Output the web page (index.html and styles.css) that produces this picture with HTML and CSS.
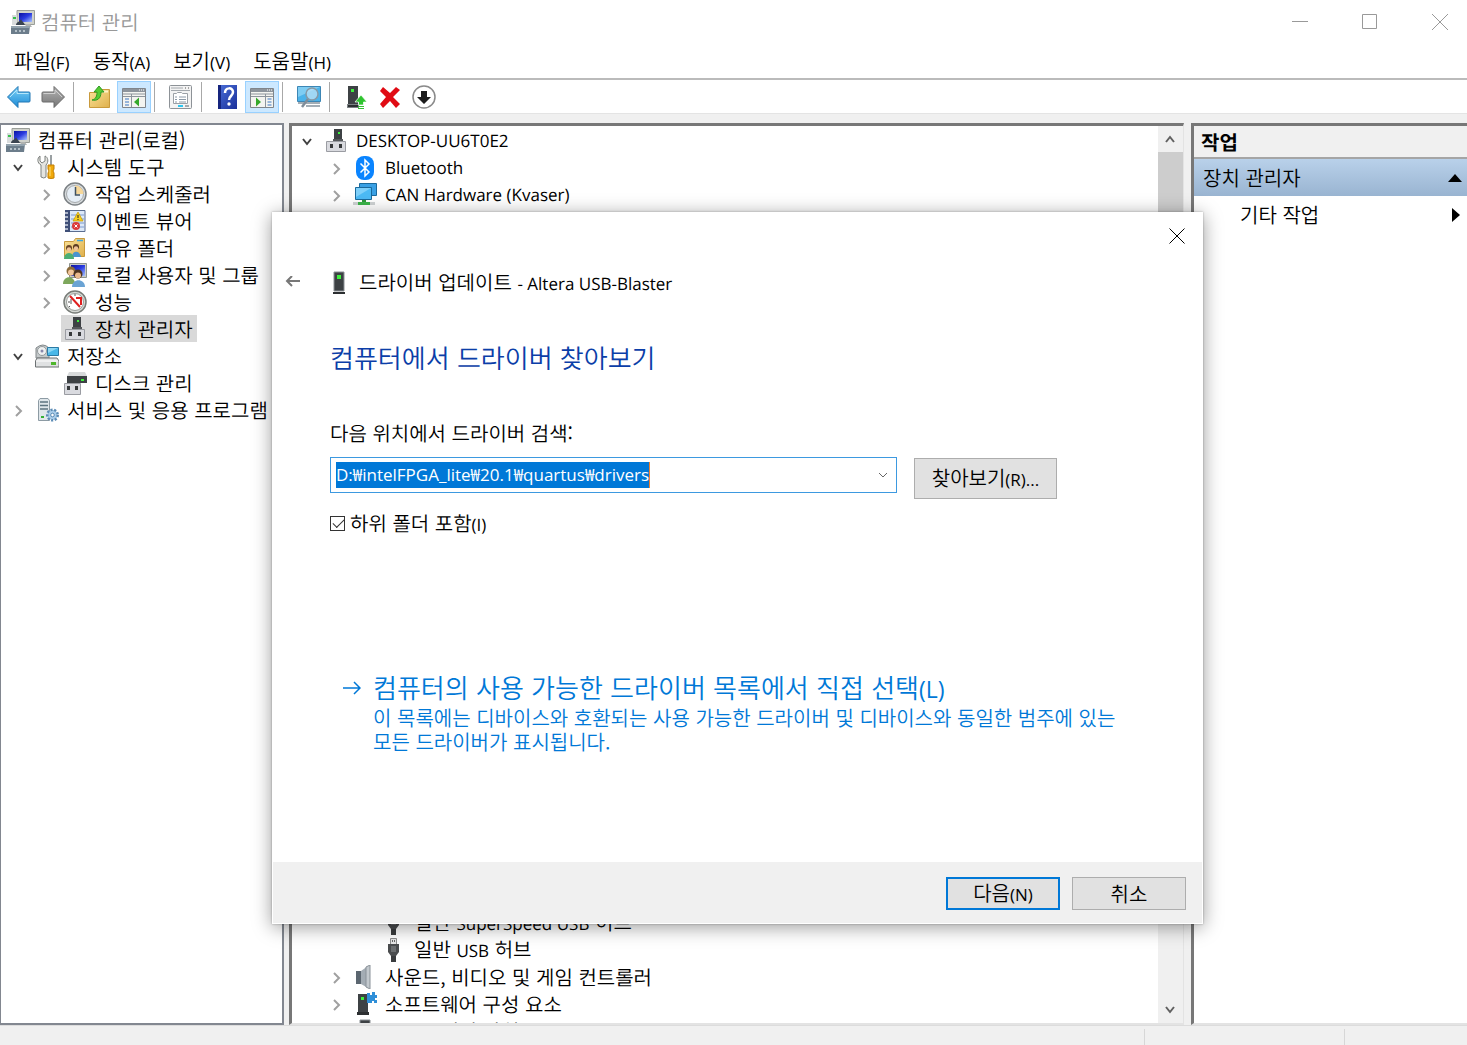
FILE: index.html
```
<!DOCTYPE html>
<html lang="ko">
<head>
    <meta charset="UTF-8">
    <meta name="viewport" content="width=device-width, initial-scale=1.0">
    <title>컴퓨터 관리</title>
    <link rel="stylesheet" href="styles.css">
</head>
<body>
    <!-- icon set -->
    <svg class="sprite" aria-hidden="true">
        <defs>
            <linearGradient id="g-screen" x1="0" y1="0" x2="1" y2="1">
                <stop offset="0" stop-color="#0a10a0"/><stop offset=".5" stop-color="#2a3be0"/><stop offset="1" stop-color="#a9c4ff"/>
            </linearGradient>
            <linearGradient id="g-blue" x1="0" y1="0" x2="0" y2="1">
                <stop offset="0" stop-color="#7fd3f7"/><stop offset="1" stop-color="#1c8ad6"/>
            </linearGradient>
            <linearGradient id="g-gray" x1="0" y1="0" x2="0" y2="1">
                <stop offset="0" stop-color="#b5b5b5"/><stop offset="1" stop-color="#747474"/>
            </linearGradient>
            <linearGradient id="g-folder" x1="0" y1="0" x2="1" y2="1">
                <stop offset="0" stop-color="#fbe39a"/><stop offset="1" stop-color="#dfb04c"/>
            </linearGradient>
            <linearGradient id="g-help" x1="0" y1="0" x2="1" y2="1">
                <stop offset="0" stop-color="#4a6fd8"/><stop offset="1" stop-color="#1a2f9a"/>
            </linearGradient>
        </defs>
        <symbol id="i-computer" viewBox="0 0 24 24">
            <path d="M6 .500h17.500v14H6z" fill="#d0d2cb" stroke="#9a9e99"/>
            <path d="M8 3h13v9H8z" fill="url(#g-screen)"/>
            <path d="M15 14h4l2 3h-7z" fill="#b0b3b1"/>
            <path d="M1 5h5v10H1z" fill="#d8dbdc"/>
            <path d="M2 7h3v2H2z" fill="#35c04a"/>
            <path d="M5 15c0-3 4-3 5-6 1 3 3 3 4 6" fill="#3a4450"/>
            <path d="M0 16h19l-1 8H0z" fill="#6c7d8b"/>
            <path d="M0 16h19v2H0z" fill="#93a3ae"/>
            <path d="M4 20h2v2H4zM8 20h2v2H8zM12 20h2v2h-2z" fill="#b4c0c8"/>
        </symbol>
        <symbol id="i-back" viewBox="0 0 24 24">
            <path d="M.500 12 11 1.500V7h11q1 0 1 1v8q0 1-1 1H11v5.500z" fill="url(#g-blue)" stroke="#2176b4"/>
            <path d="M3 12l7-7v3.500h11.500" fill="none" stroke="#b4e6fb"/>
        </symbol>
        <symbol id="i-forward" viewBox="0 0 24 24">
            <path d="M23.500 12 13 1.500V7H2q-1 0-1 1v8q0 1 1 1h11v5.500z" fill="url(#g-gray)" stroke="#6b6b6b"/>
            <path d="M2.500 8.500H14V5l7 7" fill="none" stroke="#cfcfcf"/>
        </symbol>
        <symbol id="i-upfolder" viewBox="0 0 24 24">
            <path d="M1.500 7.500h9l2-3h9v18h-20z" fill="url(#g-folder)" stroke="#c99a3c"/>
            <path d="M14 6.500h6" stroke="#fff3c8" stroke-width="2"/>
            <path d="M4 15c4-1 5-4 5-8H6l5-6 5 6h-3c0 7-4 9-9 8z" fill="#55cc34" stroke="#2f9a22"/>
        </symbol>
        <symbol id="i-treepane" viewBox="0 0 24 24">
            <path d="M.500 3.500h23v19H.500z" fill="#f4f4f0" stroke="#80858b"/>
            <path d="M1 4h22v3H1z" fill="#8d949c"/>
            <path d="M17 5h1M19 5h1M21 5h1" stroke="#fff"/>
            <path d="M1 9h22M9.500 9v13M1 11.500h22" stroke="#8d949c"/>
            <path d="M3 14h4M3 17h4M3 20h4" stroke="#3b76c4"/>
            <path d="M17 12.500v9L12 17z" fill="#35a829"/>
        </symbol>
        <symbol id="i-actionpane" viewBox="0 0 24 24">
            <path d="M.500 3.500h23v19H.500z" fill="#f4f4f0" stroke="#80858b"/>
            <path d="M1 4h22v3H1z" fill="#8d949c"/>
            <path d="M17 5h1M19 5h1M21 5h1" stroke="#fff"/>
            <path d="M1 9h22M15.500 9v13M1 11.500h22" stroke="#8d949c"/>
            <path d="M17.500 14h4M17.500 17h4M17.500 20h4" stroke="#3b76c4"/>
            <path d="M6 12.500v9l5-4.500z" fill="#35a829"/>
        </symbol>
        <symbol id="i-props" viewBox="0 0 24 24">
            <rect x=".500" y=".500" width="22" height="23" rx="1" fill="#f3f3f3" stroke="#8d9297"/>
            <path d="M2 3h12M2 5.500h19" stroke="#a4a9ae"/>
            <path d="M16 3h1M19 3h1" stroke="#555"/>
            <path d="M4.500 8.500h3l1-1h4l1 1h5v10h-14z" fill="#fff" stroke="#9ba0a6"/>
            <path d="M6 12h2M10 12h7M6 14.500h2M10 14.500h7M6 17h2M10 17h7" stroke="#8b98a6"/>
            <path d="M9 21h5" stroke="#2bc6f0" stroke-width="2"/>
            <path d="M16 21h4" stroke="#a4a9ae" stroke-width="2"/>
        </symbol>
        <symbol id="i-help" viewBox="0 0 24 24">
            <path d="M2 0h19v24H2z" fill="url(#g-help)"/>
            <path d="M2 0h3v24H2z" fill="#16257e"/>
            <path d="M9 8c0-6 8-6 8-1 0 4-4 4-4 8" fill="none" stroke="#fff" stroke-width="2.500"/>
            <circle cx="13" cy="19" r="1.700" fill="#fff"/>
        </symbol>
        <symbol id="i-scan" viewBox="0 0 24 24">
            <path d="M.500 1.500h23v15H.500z" fill="#4bb3ea" stroke="#3c86b5"/>
            <path d="M1 2h22L1 12z" fill="#7fcdf3"/>
            <path d="M1 18h22M9 21h14" stroke="#a4aeb6" stroke-width="2"/>
            <path d="M11 14 5 22" stroke="#7f8d99" stroke-width="2.500"/>
            <circle cx="15" cy="9" r="6" fill="#b5e0f6" fill-opacity=".8" stroke="#8699a6" stroke-width="1.500"/>
        </symbol>
        <symbol id="i-devupdate" viewBox="0 0 24 24">
            <path d="M4 1h10v18H4z" fill="#3d4144"/>
            <path d="M3 19h12v4H3z" fill="#7d8285"/>
            <path d="M4 20h10v2H4z" fill="#2c2f31"/>
            <path d="M7 4h3v3H7z" fill="#3df03d"/>
            <path d="m17 10 6 7h-3.500v3h-5v-3H11z" fill="#2fc42f" stroke="#fff" stroke-width=".700"/>
            <path d="M14 21.500h6M14 23.500h6" stroke="#2fc42f"/>
        </symbol>
        <symbol id="i-remove" viewBox="0 0 24 24">
            <path d="m5 2 7 6 6-6 4 3-7 7 7 7-4 4-6-7-7 7-3-4 6-7-6-6z" fill="#e00b14"/>
        </symbol>
        <symbol id="i-disable" viewBox="0 0 24 24">
            <circle cx="12" cy="12" r="11" fill="#fff" stroke="#8a8a8a" stroke-width="1.500"/>
            <path d="M9 6h6v6h4l-7 7-7-7h4z" fill="#1c1c1c"/>
        </symbol>
        <symbol id="i-tools" viewBox="0 0 24 24">
            <path d="M5 1v5l2 2 3-2V1c3 1 4 6 1 9v12q-2 2-5 0V10C2 8 2 3 5 1z" fill="#e4e4e0" stroke="#7e8280"/>
            <path d="M15 0h2v10h-2z" fill="#9aa0a2"/>
            <path d="M13 10h6v4l-1 2 1 2v5q-3 1-6 0v-5l1-2-1-2z" fill="#f0a90c" stroke="#c27f05"/>
            <path d="M15 12v9" stroke="#ffe27c"/>
        </symbol>
        <symbol id="i-clock" viewBox="0 0 24 24">
            <circle cx="12" cy="12" r="11" fill="#d8dcde" stroke="#7b8084" stroke-width="1.500"/>
            <circle cx="12" cy="12" r="8.500" fill="#e6eef6" stroke="#a5a9ac"/>
            <path d="M12 12V3.500A8.500 8.500 0 0 1 20.500 12z" fill="#f6d79a"/>
            <path d="M12.500 5v8H17" fill="none" stroke="#41525f" stroke-width="1.500"/>
        </symbol>
        <symbol id="i-event" viewBox="0 0 24 24">
            <path d="M4 1.500h18v21H4z" fill="#dce8f8" stroke="#5a6d90"/>
            <path d="M2 1h5v22H2z" fill="#3f4f78"/>
            <path d="M2 4h3M2 8h3M2 12h3M2 16h3M2 20h3" stroke="#d0d6e2" stroke-width="1.500"/>
            <path d="M8 6h13M8 10h13M8 14h13M8 18h13" stroke="#7d9bd0"/>
            <path d="m15 3 5 9H10z" fill="#f7cf1e" stroke="#c39700" stroke-width=".700"/>
            <path d="M15 6v3M15 10v1" stroke="#222"/>
            <circle cx="13" cy="17" r="4" fill="#dc3b3b"/>
            <path d="m11.500 15.500 3 3m0-3-3 3" stroke="#fff"/>
        </symbol>
        <symbol id="i-share" viewBox="0 0 24 24">
            <path d="M1.500 5.500h9l2-3h9v18h-20z" fill="url(#g-folder)" stroke="#c99a3c"/>
            <path d="M14 4.500h6" stroke="#3fa8e0" stroke-width="1.500"/>
            <circle cx="6" cy="12" r="3" fill="#6a4526"/><circle cx="6" cy="13.500" r="2.200" fill="#f0c49a"/>
            <circle cx="13" cy="11" r="3" fill="#5a3a20"/><circle cx="13" cy="12.500" r="2.200" fill="#f0c49a"/>
            <path d="M9 21c0-7 8-7 9 0z" fill="#4a94cf"/>
            <path d="M1 23c0-8 10-8 10 0z" fill="#4cae74"/>
        </symbol>
        <symbol id="i-users" viewBox="0 0 24 24">
            <path d="M6.500.500h17v14h-17z" fill="#c9ccc6" stroke="#8d928e"/>
            <path d="M8 2h14v11H8z" fill="url(#g-screen)"/>
            <circle cx="8" cy="8" r="4.500" fill="#8a6a3a"/><circle cx="8" cy="9.500" r="3" fill="#f2c69c"/>
            <circle cx="15" cy="11" r="4.500" fill="#4d3320"/><circle cx="15" cy="12.500" r="3" fill="#eab98d"/>
            <path d="M0 21c0-9 12-9 12 0z" fill="#7da75c"/>
            <path d="M9 24c0-9 13-9 13 0z" fill="#6aa3d4"/>
        </symbol>
        <symbol id="i-perf" viewBox="0 0 24 24">
            <circle cx="12" cy="12" r="11" fill="#d5d8d4" stroke="#787c78" stroke-width="1.500"/>
            <circle cx="12" cy="12" r="8.500" fill="#fff" stroke="#999d99"/>
            <path d="m7 6 10 11M13 8h5v7" fill="none" stroke="#df2020" stroke-width="2"/>
            <path d="M5 12h2M12 4v2M6 17l1-1M8 9v5" stroke="#555"/>
        </symbol>
        <symbol id="i-devmgr" viewBox="0 0 24 24">
            <path d="M10 0h8v12h-8z" fill="#3d4144"/>
            <path d="M14 3h2v2h-2z" fill="#3df03d"/>
            <path d="M2.500 12.500h19v10h-19z" fill="#d9dadf" stroke="#9a9ca2"/>
            <path d="M9 10h10v2H9z" fill="#55585b"/>
            <path d="M6 15h3v4H6zM15 15h3v4h-3z" fill="#37393b"/>
        </symbol>
        <symbol id="i-storage" viewBox="0 0 24 24">
            <path d="M1 4Q8-2 14 4v10H1z" fill="#c4c9ca" stroke="#82888a"/>
            <circle cx="7" cy="7" r="4.500" fill="#eef0f0" stroke="#93999b"/><circle cx="7" cy="7" r="1.500" fill="#88a"/>
            <path d="M12.500 3.500h11v8h-11z" fill="#49b7e8" stroke="#2b7aa5"/>
            <path d="M13 4h10L13 9z" fill="#8bd6f4"/>
            <path d="M2 14h20l2 3v6H.500v-6z" fill="#dfe1e2" stroke="#6c7173"/>
            <path d="M1 17h22" stroke="#fff"/>
            <path d="M16 18h5v3h-5z" fill="#4fb62c"/>
        </symbol>
        <symbol id="i-disk" viewBox="0 0 24 24">
            <path d="M4 5 6 1h16l2 4z" fill="#d8dadb"/>
            <path d="M4 5h20v7H4z" fill="#3d4144"/>
            <path d="M18 8h3v2h-3z" fill="#3df03d"/>
            <path d="M1.500 12.500h16v11h-16z" fill="#d9dadf" stroke="#9a9ca2"/>
            <path d="M4 15h3v4H4zM12 15h3v4h-3z" fill="#37393b"/>
        </symbol>
        <symbol id="i-services" viewBox="0 0 24 24">
            <path d="M3.500 2.500 5 .500h8l1.500 2v20h-11z" fill="#dfe6ea" stroke="#8d9ba4"/>
            <path d="M5 4h8M5 7.500h8M5 11h8" stroke="#5d7480" stroke-width="1.500"/>
            <path d="M6 19h3" stroke="#35b035" stroke-width="2"/>
            <circle cx="17.500" cy="17" r="5" fill="#9cc3e2" stroke="#5b8bb5" stroke-width="3" stroke-dasharray="2 1.500"/>
            <circle cx="17.500" cy="17" r="4" fill="#a9cdea"/>
            <circle cx="17.500" cy="17" r="1.800" fill="#fff" stroke="#5b8bb5"/>
        </symbol>
        <symbol id="i-bluetooth" viewBox="0 0 24 24">
            <rect x="3" y="0" width="18" height="24" rx="8" fill="#0a84ff"/>
            <path d="m7.500 7.500 8.500 8.500-4 4V4l4 4-8.500 8.500" fill="none" stroke="#fff" stroke-width="1.500"/>
        </symbol>
        <symbol id="i-network" viewBox="0 0 24 24">
            <path d="M6.500.500h17v12h-17z" fill="#3aa0e4" stroke="#1b6a9c"/>
            <path d="M2.500 4.500h16v12h-16z" fill="#4cbaf5" stroke="#1b6a9c"/>
            <path d="M3 5h15L3 14z" fill="#7fd0fa"/>
            <path d="M9 17h4v3H9z" fill="#2f9a3c"/>
            <path d="M0 19h22v3H0z" fill="#cfd3d4"/>
            <path d="M5 19h12v3H5z" fill="#3cb54a"/>
        </symbol>
        <symbol id="i-usb" viewBox="0 0 24 24">
            <path d="M8.500.500h6v6h-6z" fill="#e6e6e6" stroke="#8d8d8d"/>
            <path d="M10 2h1v2h-1zM12 2h1v2h-1z" fill="#666"/>
            <path d="M6 6h11v8l-3 4H9l-3-4z" fill="#4a4c4e"/>
            <path d="M9 8h5v6H9z" fill="#6b6e70"/>
            <path d="M9 18h5v6H9z" fill="#3a3c3e"/>
        </symbol>
        <symbol id="i-sound" viewBox="0 0 24 24">
            <path d="M3 6h5v13H3z" fill="#5b6670"/>
            <path d="M8 6l7-5v22l-7-4z" fill="#a3acb4"/>
            <path d="M13 2l4-2v24l-4-2z" fill="#c3c9ce" stroke="#8a9299"/>
        </symbol>
        <symbol id="i-software" viewBox="0 0 24 24">
            <path d="M5 2h10v18H5z" fill="#3d4144"/>
            <path d="M4 20h12v3H4z" fill="#2c2f31"/>
            <path d="M8 5h3v3H8z" fill="#3df03d"/>
            <path d="M14 1h3v2h2V0h3v3h2v3h-2v2h2v3h-3V9h-2v2h-5z" fill="#2f8fd8"/>
        </symbol>
        <symbol id="i-device" viewBox="0 0 24 24">
            <path d="M7 1h10v19H7z" fill="#3d4144" stroke="#8b9094"/>
            <path d="M6 21h12v2H6z" fill="#2c2f31"/>
            <path d="M10 4h4v4h-4z" fill="#3df03d"/>
        </symbol>
        <symbol id="i-right" viewBox="0 0 24 24"><path d="m10 8 5 5-5 5" fill="none" stroke="#a0a0a0" stroke-width="2"/></symbol>
        <symbol id="i-down" viewBox="0 0 24 24"><path d="m8 10 4 5 4-5" fill="none" stroke="#404040" stroke-width="2"/></symbol>
        <symbol id="i-up" viewBox="0 0 24 24"><path d="m7 16 4-5 4 5" fill="none" stroke="#606060" stroke-width="2"/></symbol>
        <symbol id="i-scrolldown" viewBox="0 0 24 24"><path d="m7 8 4 5 4-5" fill="none" stroke="#606060" stroke-width="2"/></symbol>
    </svg>

    <header class="titlebar">
        <svg class="icon"><use href="#i-computer"/></svg>
        <h1>컴퓨터 관리</h1>
        <div class="window-buttons">
            <button aria-label="최소화"><svg width="16" height="16"><path d="M0 7.500h16" stroke="#999"/></svg></button>
            <button aria-label="최대화"><svg width="16" height="16"><path d="M.5.5h14v14H.5z" fill="none" stroke="#999"/></svg></button>
            <button aria-label="닫기"><svg width="16" height="16"><path d="m0 0 16 16M16 0 0 16" stroke="#999"/></svg></button>
        </div>
    </header>

    <nav class="menu">
        <button>파일<span class="en">(F)</span></button>
        <button>동작<span class="en">(A)</span></button>
        <button>보기<span class="en">(V)</span></button>
        <button>도움말<span class="en">(H)</span></button>
    </nav>

    <div class="toolbar">
        <button aria-label="뒤로"><svg class="icon"><use href="#i-back"/></svg></button>
        <button aria-label="앞으로"><svg class="icon"><use href="#i-forward"/></svg></button>
        <span class="sep"></span>
        <button aria-label="위로"><svg class="icon"><use href="#i-upfolder"/></svg></button>
        <button class="on" aria-label="콘솔 트리"><svg class="icon"><use href="#i-treepane"/></svg></button>
        <span class="sep"></span>
        <button aria-label="속성"><svg class="icon"><use href="#i-props"/></svg></button>
        <span class="sep"></span>
        <button aria-label="도움말"><svg class="icon"><use href="#i-help"/></svg></button>
        <button class="on" aria-label="작업 창"><svg class="icon"><use href="#i-actionpane"/></svg></button>
        <span class="sep"></span>
        <button aria-label="검색"><svg class="icon"><use href="#i-scan"/></svg></button>
        <span class="sep"></span>
        <button aria-label="업데이트"><svg class="icon"><use href="#i-devupdate"/></svg></button>
        <button aria-label="제거"><svg class="icon"><use href="#i-remove"/></svg></button>
        <button aria-label="사용 안 함"><svg class="icon"><use href="#i-disable"/></svg></button>
    </div>

    <main class="panes">
        <ul class="pane tree console">
            <li class="root"><span class="node"><svg class="icon"><use href="#i-computer"/></svg>컴퓨터 관리(로컬)</span></li>
            <li><svg class="icon"><use href="#i-down"/></svg><span class="node"><svg class="icon"><use href="#i-tools"/></svg>시스템 도구</span></li>
            <li class="l2"><svg class="icon"><use href="#i-right"/></svg><span class="node"><svg class="icon"><use href="#i-clock"/></svg>작업 스케줄러</span></li>
            <li class="l2"><svg class="icon"><use href="#i-right"/></svg><span class="node"><svg class="icon"><use href="#i-event"/></svg>이벤트 뷰어</span></li>
            <li class="l2"><svg class="icon"><use href="#i-right"/></svg><span class="node"><svg class="icon"><use href="#i-share"/></svg>공유 폴더</span></li>
            <li class="l2"><svg class="icon"><use href="#i-right"/></svg><span class="node"><svg class="icon"><use href="#i-users"/></svg>로컬 사용자 및 그룹</span></li>
            <li class="l2"><svg class="icon"><use href="#i-right"/></svg><span class="node"><svg class="icon"><use href="#i-perf"/></svg>성능</span></li>
            <li class="l2"><svg class="icon"></svg><span class="node selected"><svg class="icon"><use href="#i-devmgr"/></svg>장치 관리자</span></li>
            <li><svg class="icon"><use href="#i-down"/></svg><span class="node"><svg class="icon"><use href="#i-storage"/></svg>저장소</span></li>
            <li class="l2"><svg class="icon"></svg><span class="node"><svg class="icon"><use href="#i-disk"/></svg>디스크 관리</span></li>
            <li><svg class="icon"><use href="#i-right"/></svg><span class="node"><svg class="icon"><use href="#i-services"/></svg>서비스 및 응용 프로그램</span></li>
        </ul>

        <section class="pane devices">
            <div class="device-list">
                <ul class="tree">
                    <li><svg class="icon"><use href="#i-down"/></svg><span class="node"><svg class="icon"><use href="#i-devmgr"/></svg><span class="en">DESKTOP-UU6T0E2</span></span></li>
                    <li class="l2"><svg class="icon"><use href="#i-right"/></svg><span class="node"><svg class="icon"><use href="#i-bluetooth"/></svg><span class="en">Bluetooth</span></span></li>
                    <li class="l2"><svg class="icon"><use href="#i-right"/></svg><span class="node"><svg class="icon"><use href="#i-network"/></svg><span class="en">CAN Hardware (Kvaser)</span></span></li>
                </ul>
                <ul class="tree tree-end">
                    <li class="l3"><svg class="icon"></svg><span class="node"><svg class="icon"><use href="#i-usb"/></svg><span>일반 <span class="en">SuperSpeed USB</span> 허브</span></span></li>
                    <li class="l3"><svg class="icon"></svg><span class="node"><svg class="icon"><use href="#i-usb"/></svg><span>일반 <span class="en">USB</span> 허브</span></span></li>
                    <li class="l2"><svg class="icon"><use href="#i-right"/></svg><span class="node"><svg class="icon"><use href="#i-sound"/></svg>사운드, 비디오 및 게임 컨트롤러</span></li>
                    <li class="l2"><svg class="icon"><use href="#i-right"/></svg><span class="node"><svg class="icon"><use href="#i-software"/></svg>소프트웨어 구성 요소</span></li>
                    <li class="l2"><svg class="icon"><use href="#i-right"/></svg><span class="node"><svg class="icon"><use href="#i-device"/></svg>소프트웨어 장치</span></li>
                </ul>
            </div>
            <div class="scrollbar">
                <svg class="icon"><use href="#i-up"/></svg>
                <div class="thumb"></div>
                <svg class="icon"><use href="#i-scrolldown"/></svg>
            </div>
        </section>

        <aside class="pane actions">
            <h2>작업</h2>
            <button class="group">장치 관리자<svg width="14" height="8"><path d="M0 8 7 0l7 8z"/></svg></button>
            <button class="more">기타 작업<svg width="8" height="14"><path d="m0 0 8 7-8 7z"/></svg></button>
        </aside>
    </main>

    <footer class="statusbar"><span></span><span></span><span></span></footer>

    <form class="dialog" role="dialog" aria-labelledby="dialog-title">
        <div class="dialog-top">
            <button type="button" class="close" aria-label="닫기"><svg width="16" height="16"><path d="m.5.5 15 15m0-15-15 15" stroke="#000"/></svg></button>
        </div>
        <div class="dialog-title">
            <button type="button" class="back" aria-label="뒤로"><svg width="16" height="14"><path d="M15 5H2m5-5L2 5l5 5" fill="none" stroke="#777" stroke-width="2"/></svg></button>
            <svg class="icon"><use href="#i-device"/></svg>
            <span id="dialog-title">드라이버 업데이트 <span class="en">- Altera USB-Blaster</span></span>
        </div>
        <div class="dialog-body">
            <h2>컴퓨터에서 드라이버 찾아보기</h2>
            <label for="path">다음 위치에서 드라이버 검색:</label>
            <div class="path-row">
                <div class="combo">
                    <input type="text" id="path" value="D:₩intelFPGA_lite₩20.1₩quartus₩drivers" spellcheck="false">
                    <button type="button" aria-label="목록"><svg width="10" height="6"><path d="m1 1 4 4 4-4" fill="none" stroke="#666"/></svg></button>
                </div>
                <button type="button" class="btn browse">찾아보기<span class="en">(R)...</span></button>
            </div>
            <div class="check-row">
                <input type="checkbox" id="sub" checked>
                <label for="sub">하위 폴더 포함<span class="en">(I)</span></label>
            </div>
            <button type="button" class="command">
                <svg width="18" height="14"><path d="M0 7h17m-6-6 6 6-6 6" fill="none" stroke="#0078d7" stroke-width="1.500"/></svg>
                <span>
                    <strong>컴퓨터의 사용 가능한 드라이버 목록에서 직접 선택<span class="en">(L)</span></strong>
                    <small>이 목록에는 디바이스와 호환되는 사용 가능한 드라이버 및 디바이스와 동일한 범주에 있는 모든 드라이버가 표시됩니다.</small>
                </span>
            </button>
        </div>
        <div class="dialog-footer">
            <button type="button" class="btn primary">다음<span class="en">(N)</span></button>
            <button type="button" class="btn">취소</button>
        </div>
    </form>

    <script>
        const path = document.getElementById('path');
        path.focus();
        path.select();
    </script>
</body>
</html>
```
FILE: styles.css
```
* { box-sizing: border-box; }
body {
    margin: 0;
    height: 100vh;
    display: flex;
    flex-direction: column;
    background: #f0f0f0;
    color: #000;
    font: 350 20px/27px "Noto Sans CJK KR", sans-serif;
    text-rendering: geometricPrecision;
    overflow: hidden;
}
h1, h2, ul { margin: 0; padding: 0; font-size: 20px; }
h1, strong { font-weight: 350; }
ul { list-style: none; }
button { border: 0; padding: 0; background: none; color: inherit; font: inherit; }
svg { flex: none; display: block; }
.sprite { position: absolute; width: 0; height: 0; }
.icon { width: 24px; height: 24px; }
.en { font-family: "Open Sans", "Noto Sans CJK KR", sans-serif; font-size: 17px; font-weight: 400; }

.titlebar { display: flex; align-items: center; height: 43px; padding-left: 11px; gap: 6px; background: #fff; }
.titlebar h1 { color: #999; }
.window-buttons { display: flex; gap: 54px; margin-left: auto; padding-right: 19px; }

.menu { display: flex; align-items: center; height: 37px; padding: 1px 0 0 14px; gap: 23px; background: #fff; border-bottom: 2px solid #bbb; }

.toolbar { display: flex; height: 34px; padding: 1px 0 0 2px; background: #fff; border-bottom: 1px solid #e4e4e4; }
.toolbar button { display: flex; align-items: center; justify-content: center; width: 34px; }
.toolbar .on { background: #cce8ff; border: 1px solid #99d1ff; }
.sep { width: 1px; margin: 1px 9px 1px 3px; background: #a8a8a8; }

.panes { flex: 1; display: flex; min-height: 0; padding-top: 9px; }
.pane { background: #fff; }
.console { width: 284px; padding-top: 1px; border: 1px solid #828790; border-width: 2px 2px 2px 1px; }
.tree li { display: flex; align-items: center; height: 27px; padding-left: 5px; gap: 3px; white-space: nowrap; }
.tree .l2 { padding-left: 33px; }
.node { display: flex; align-items: center; gap: 8px; height: 27px; padding: 0 4px 0 2px; }
.root .node { padding-left: 0; }
.selected { background: #d9d9d9; }

.devices { flex: 1; display: flex; margin: 0 7px 0 5px; border: 3px solid #777; border-width: 3px 1px 2px 3px; border-right-color: #e3e3e3; border-bottom-color: #e3e3e3; }
.device-list { flex: 1; display: flex; flex-direction: column; justify-content: space-between; overflow: hidden; padding-top: 1px; }
.devices li { padding-left: 3px; }
.devices .l2 { padding-left: 32px; }
.devices .l3 { padding-left: 61px; }
.tree-end { margin-bottom: -21px; }
.scrollbar { display: flex; flex-direction: column; align-items: center; width: 25px; background: #f0f0f0; }
.thumb { width: 25px; height: 300px; margin: 2px 0 auto; background: #cdcdcd; }

.actions { width: 276px; border: 3px solid #777; border-right: 0; border-bottom: 2px solid #e3e3e3; }
.actions h2 { height: 33px; padding: 3px 7px; line-height: 26px; background: #f0f0f0; border-bottom: 2px solid #a5a5a5; }
.actions button { display: flex; align-items: center; justify-content: space-between; width: 100%; height: 37px; }
.group { padding: 0 5px 0 9px; background: linear-gradient(#b9d1ea, #99b4d1); }
.more { padding: 0 7px 0 46px; }

.statusbar { display: flex; height: 20px; border-top: 1px solid #dcdcdc; }
.statusbar span { width: 123px; margin-top: 3px; border-left: 1px solid #d7d7d7; }
.statusbar span:first-child { flex: 1; border: 0; }
.statusbar span:nth-child(2) { width: 200px; }

.dialog {
    position: absolute;
    left: 272px;
    top: 212px;
    width: 931px;
    height: 712px;
    display: flex;
    flex-direction: column;
    background: #fff;
    border: 1px solid #fff;
    box-shadow: 0 3px 18px rgba(0, 0, 0, .4), 0 0 2px rgba(0, 0, 0, .3);
}
.dialog-top { display: flex; justify-content: flex-end; padding: 15px 17px 0 0; }
.dialog-title { display: flex; align-items: center; margin-top: 24px; padding-left: 12px; }
.dialog-title .icon { margin: 0 8px 0 26px; }
.dialog-body { flex: 1; display: flex; flex-direction: column; align-items: flex-start; padding: 42px 58px 0 57px; }
.dialog h2 { color: #0b3ea8; font-size: 26px; font-weight: 350; line-height: 38px; }
.dialog-body > label { margin-top: 42px; }
.path-row { display: flex; align-items: flex-start; gap: 17px; margin-top: 11px; }
.combo { display: flex; align-items: center; width: 567px; height: 36px; padding: 0 8px 0 5px; border: 1px solid #3d99e0; }
.combo input { field-sizing: content; height: 26px; padding: 0; border: 0; border-right: 1px solid #f08030; outline: 0; font: 17px/26px "Open Sans", "Noto Sans CJK KR", sans-serif; }
.combo input::selection { background: #0078d7; color: #fff; }
.combo button { margin-left: auto; }
.btn { width: 114px; height: 33px; background: #e1e1e1; border: 1px solid #adadad; }
.browse { width: 143px; height: 41px; margin-top: 1px; }
.check-row { display: flex; align-items: center; gap: 5px; margin-top: 10px; }
.check-row input { appearance: none; width: 15px; height: 15px; margin: 0; border: 1px solid #333; background: #fff; }
.check-row input:checked::before { content: ""; display: block; width: 10px; height: 5px; margin: 2px 0 0 2px; border: solid #333; border-width: 0 0 1px 1px; transform: rotate(-45deg); }
.command { display: flex; gap: 12px; margin-top: 132px; padding-left: 13px; color: #0078d7; text-align: left; }
.command > svg { margin-top: 11px; }
.command strong, .command small { display: block; }
.command strong { font-size: 26px; line-height: 34px; }
.command strong .en { font-size: 23px; }
.command small { font-size: 20px; line-height: 24px; word-break: keep-all; }
.dialog-footer { display: flex; justify-content: flex-end; gap: 12px; height: 61px; padding: 15px 16px; background: #f0f0f0; }
.primary { border: 2px solid #0078d7; }
```
